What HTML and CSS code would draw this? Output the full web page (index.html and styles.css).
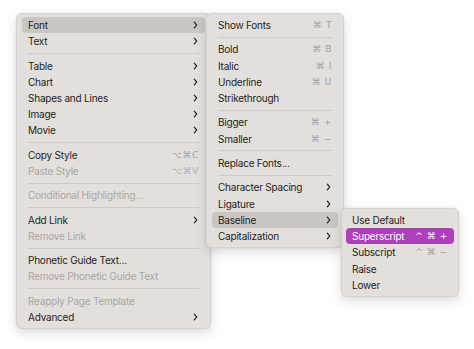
FILE: index.html
```html
<!DOCTYPE html>
<html lang="en">
<head>
  <meta charset="UTF-8">
  <title>Format menu</title>
  <link rel="stylesheet" href="styles.css">
</head>
<body>
<div class="stage">
  <!-- main menu -->
  <div class="menu menu-main">
    <div class="item open"><span class="label">Font</span><svg class="chev" viewBox="0 0 6 10"><path d="M1.5 1.5 L4.5 5 L1.5 8.5"/></svg></div>
    <div class="item"><span class="label">Text</span><svg class="chev" viewBox="0 0 6 10"><path d="M1.5 1.5 L4.5 5 L1.5 8.5"/></svg></div>
    <div class="sep"></div>
    <div class="item"><span class="label">Table</span><svg class="chev" viewBox="0 0 6 10"><path d="M1.5 1.5 L4.5 5 L1.5 8.5"/></svg></div>
    <div class="item"><span class="label">Chart</span><svg class="chev" viewBox="0 0 6 10"><path d="M1.5 1.5 L4.5 5 L1.5 8.5"/></svg></div>
    <div class="item"><span class="label">Shapes and Lines</span><svg class="chev" viewBox="0 0 6 10"><path d="M1.5 1.5 L4.5 5 L1.5 8.5"/></svg></div>
    <div class="item"><span class="label">Image</span><svg class="chev" viewBox="0 0 6 10"><path d="M1.5 1.5 L4.5 5 L1.5 8.5"/></svg></div>
    <div class="item"><span class="label">Movie</span><svg class="chev" viewBox="0 0 6 10"><path d="M1.5 1.5 L4.5 5 L1.5 8.5"/></svg></div>
    <div class="sep"></div>
    <div class="item"><span class="label">Copy Style</span><span class="key">⌥⌘C</span></div>
    <div class="item disabled"><span class="label">Paste Style</span><span class="key">⌥⌘V</span></div>
    <div class="sep"></div>
    <div class="item disabled"><span class="label">Conditional Highlighting...</span></div>
    <div class="sep"></div>
    <div class="item"><span class="label">Add Link</span><svg class="chev" viewBox="0 0 6 10"><path d="M1.5 1.5 L4.5 5 L1.5 8.5"/></svg></div>
    <div class="item disabled"><span class="label">Remove Link</span></div>
    <div class="sep"></div>
    <div class="item"><span class="label">Phonetic Guide Text...</span></div>
    <div class="item disabled"><span class="label">Remove Phonetic Guide Text</span></div>
    <div class="sep"></div>
    <div class="item disabled"><span class="label">Reapply Page Template</span></div>
    <div class="item"><span class="label">Advanced</span><svg class="chev" viewBox="0 0 6 10"><path d="M1.5 1.5 L4.5 5 L1.5 8.5"/></svg></div>
  </div>

  <!-- Font submenu -->
  <div class="menu menu-font">
    <div class="item"><span class="label">Show Fonts</span><span class="key">⌘ T</span></div>
    <div class="sep"></div>
    <div class="item"><span class="label">Bold</span><span class="key">⌘ B</span></div>
    <div class="item"><span class="label">Italic</span><span class="key">⌘ I</span></div>
    <div class="item"><span class="label">Underline</span><span class="key">⌘ U</span></div>
    <div class="item"><span class="label">Strikethrough</span></div>
    <div class="sep"></div>
    <div class="item"><span class="label">Bigger</span><span class="key">⌘ +</span></div>
    <div class="item"><span class="label">Smaller</span><span class="key">⌘ −</span></div>
    <div class="sep"></div>
    <div class="item"><span class="label">Replace Fonts...</span></div>
    <div class="sep"></div>
    <div class="item"><span class="label">Character Spacing</span><svg class="chev" viewBox="0 0 6 10"><path d="M1.5 1.5 L4.5 5 L1.5 8.5"/></svg></div>
    <div class="item"><span class="label">Ligature</span><svg class="chev" viewBox="0 0 6 10"><path d="M1.5 1.5 L4.5 5 L1.5 8.5"/></svg></div>
    <div class="item open"><span class="label">Baseline</span><svg class="chev" viewBox="0 0 6 10"><path d="M1.5 1.5 L4.5 5 L1.5 8.5"/></svg></div>
    <div class="item"><span class="label">Capitalization</span><svg class="chev" viewBox="0 0 6 10"><path d="M1.5 1.5 L4.5 5 L1.5 8.5"/></svg></div>
  </div>

  <!-- Baseline submenu -->
  <div class="menu menu-baseline">
    <div class="item"><span class="label">Use Default</span></div>
    <div class="item selected"><span class="label">Superscript</span><span class="key">^ ⌘ +</span></div>
    <div class="item"><span class="label">Subscript</span><span class="key">^ ⌘ −</span></div>
    <div class="item"><span class="label">Raise</span></div>
    <div class="item"><span class="label">Lower</span></div>
  </div>
</div>
</body>
</html>
```

FILE: styles.css
```css
body {
  margin: 0;
  background: #ffffff;
  font-family: Inter, "Liberation Sans", sans-serif;
  font-size: 10px;
  letter-spacing: -0.22px;
  color: #1e1e1e;
}
.stage {
  position: relative;
  width: 474px;
  height: 349px;
  overflow: hidden;
}
.menu {
  display: flex;
  flex-direction: column;
  padding: 3px 0;
  background-color: #e3dfdc;
  border: 1px solid #d6d2cf;
  border-radius: 6px;
  box-shadow: 0 4px 12px rgba(0, 0, 0, 0.14), 0 0 2px rgba(0, 0, 0, 0.08);
}
.menu-main {
  width: 193px;
  margin: 13px 0 0 16px;
}
/* submenus sit over the menu they come from */
.menu-font {
  position: absolute;
  left: 206px;
  top: 13px;
  width: 136px;
}
.menu-baseline {
  position: absolute;
  left: 341px;
  top: 208px;
  width: 116px;
}
.item {
  display: flex;
  align-items: center;
  height: 16.2px;
  margin: 0 5px;
  padding: 0 6px;
  border-radius: 4px;
  white-space: nowrap;
}
.menu-baseline .item {
  margin: 0 4px;
}
.item .label {
  flex: 1;
}
.item.open {
  background-color: #cac6c3;
}
.item.selected {
  background-color: #ae3fbc;
  color: #ffffff;
}
.item.disabled {
  color: #aaa6a3;
}
.key {
  font-family: "DejaVu Sans", sans-serif;
  font-size: 9px;
  color: #a5a19e;
  letter-spacing: 0.6px;
}
.item.selected .key {
  color: #ffffff;
}
.item.disabled .key {
  color: #b3afac;
}
.chev {
  width: 5px;
  height: 8px;
  margin-right: 1px;
  fill: none;
  stroke: #262626;
  stroke-width: 1.5;
  stroke-linecap: round;
  stroke-linejoin: round;
}
.sep {
  height: 8.2px;
  margin: 0 11px;
  display: flex;
  align-items: center;
}
.sep::before {
  content: "";
  flex: 1;
  height: 1px;
  background-color: #cfcbc8;
}
```
